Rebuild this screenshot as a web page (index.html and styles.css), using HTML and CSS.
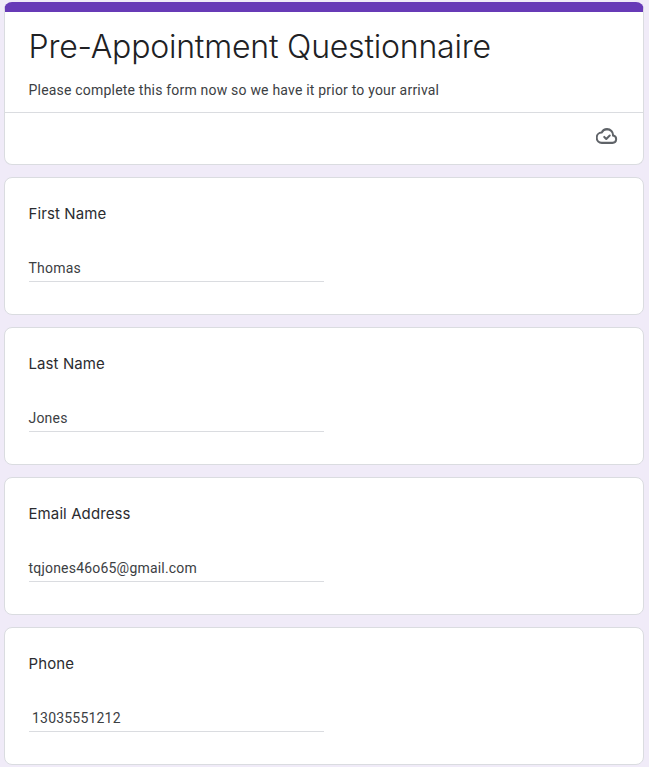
FILE: index.html
```html
<!DOCTYPE html>
<html lang="en">

<head>
    <meta charset="UTF-8">
    <meta name="viewport" content="width=device-width, initial-scale=1.0">
    <title>Pre-Appointment Questionnaire</title>
    <link rel="stylesheet" href="styles.css">
</head>

<body>
    <form class="form">
        <div class="card header">
            <div class="header-top">
                <h1>Pre-Appointment Questionnaire</h1>
                <p>Please complete this form now so we have it prior to your arrival</p>
            </div>
            <div class="header-bottom">
                <svg class="cloud" width="22" height="22" viewBox="0 0 24 24" fill="none" stroke="#5f6368" stroke-width="2.2" stroke-linejoin="round" stroke-linecap="round">
                    <path d="M6.5 19.5h11.5a4 4 0 0 0 .6-7.95A6.6 6.6 0 0 0 12 4.5a6.6 6.6 0 0 0-5.8 3.8A5.6 5.6 0 0 0 6.5 19.5z" />
                    <path d="M9 13l2.2 2.2 3.8-3.8" />
                </svg>
            </div>
        </div>

        <div class="card question">
            <label>First Name</label>
            <div class="answer">Thomas</div>
        </div>
        <div class="card question">
            <label>Last Name</label>
            <div class="answer">Jones</div>
        </div>
        <div class="card question">
            <label>Email Address</label>
            <div class="answer">tqjones46o65@gmail.com</div>
        </div>
        <div class="card question">
            <label>Phone</label>
            <div class="answer phone">13035551212</div>
        </div>
    </form>
</body>

</html>
```

FILE: styles.css
```css
html,
body {
    margin: 0;
    padding: 0;
    height: 100%;
    overflow: hidden;
}

body {
    background-color: #f0ebf8;
    color: #202124;
    font-family: "Roboto", "Liberation Sans", sans-serif;
}

.form {
    display: flex;
    flex-direction: column;
    gap: 12px;
    padding: 2px 5px 0 4px;
}

.card {
    background-color: #fff;
    border: 1px solid #dadce0;
    border-radius: 8px;
}

.header {
    height: 163px;
    box-sizing: border-box;
    border-top: 10px solid #673ab7;
    display: flex;
    flex-direction: column;
}

.header-top {
    height: 101px;
    box-sizing: border-box;
    padding: 15px 24px 0 23.5px;
    border-bottom: 1px solid #dadce0;
}

h1 {
    margin: 0;
    font-family: "Inter", "Liberation Sans", sans-serif;
    font-size: 32px;
    font-weight: 300;
    line-height: 40px;
    letter-spacing: -0.2px;
}

p {
    margin: 13px 0 0;
    font-size: 14px;
    line-height: 20px;
    letter-spacing: 0.2px;
    color: #3c4043;
}

.header-bottom {
    flex: 1;
    display: flex;
    justify-content: flex-end;
    align-items: center;
    padding: 0 25px 6px 0;
}

.question {
    height: 138px;
    box-sizing: border-box;
    padding: 24px 24px 0 23.5px;
}

label {
    display: block;
    font-family: "Inter", "Liberation Sans", sans-serif;
    font-size: 15px;
    line-height: 24px;
    letter-spacing: 0.1px;
    color: #2b2c30;
}

.answer {
    width: 295px;
    margin-top: 31px;
    height: 25px;
    box-sizing: border-box;
    border-bottom: 1px solid #dadce0;
    font-size: 14px;
    line-height: 22px;
    letter-spacing: 0.2px;
    color: #3c4043;
}

.phone {
    padding-left: 3.5px;
}
```
